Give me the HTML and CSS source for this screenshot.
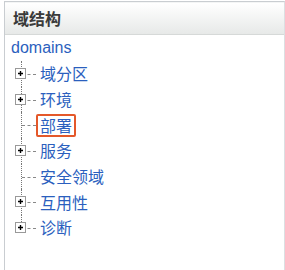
FILE: index.html
```html
<!DOCTYPE html>
<html lang="zh">
<head>
    <meta charset="UTF-8">
    <title>域结构</title>
    <link rel="stylesheet" href="styles.css">
</head>
<body>
    <div class="panel">
        <div class="panel-header">域结构</div>
        <div class="panel-body">
            <div class="root">domains</div>
            <ul class="tree">
                <li class="node"><svg class="toggle" viewBox="0 0 11 11"><rect x="0.5" y="0.5" width="10" height="10" fill="#fff" stroke="#999"/><path d="M3 5.5h5M5.5 3v5" stroke="#000" stroke-width="1.4"/></svg><span class="label">域分区</span></li>
                <li class="node"><svg class="toggle" viewBox="0 0 11 11"><rect x="0.5" y="0.5" width="10" height="10" fill="#fff" stroke="#999"/><path d="M3 5.5h5M5.5 3v5" stroke="#000" stroke-width="1.4"/></svg><span class="label">环境</span></li>
                <li class="node leaf"><span class="label selected">部署</span></li>
                <li class="node"><svg class="toggle" viewBox="0 0 11 11"><rect x="0.5" y="0.5" width="10" height="10" fill="#fff" stroke="#999"/><path d="M3 5.5h5M5.5 3v5" stroke="#000" stroke-width="1.4"/></svg><span class="label">服务</span></li>
                <li class="node leaf"><span class="label">安全领域</span></li>
                <li class="node"><svg class="toggle" viewBox="0 0 11 11"><rect x="0.5" y="0.5" width="10" height="10" fill="#fff" stroke="#999"/><path d="M3 5.5h5M5.5 3v5" stroke="#000" stroke-width="1.4"/></svg><span class="label">互用性</span></li>
                <li class="node last"><svg class="toggle" viewBox="0 0 11 11"><rect x="0.5" y="0.5" width="10" height="10" fill="#fff" stroke="#999"/><path d="M3 5.5h5M5.5 3v5" stroke="#000" stroke-width="1.4"/></svg><span class="label">诊断</span></li>
            </ul>
        </div>
    </div>
</body>
</html>
```

FILE: styles.css
```css
/* General */
body {
    margin: 0;
    padding: 1px 0 0 4px;
    background: #fff;
    font-family: "Liberation Sans", "Noto Sans CJK SC", sans-serif;
}

/* Panel */
.panel {
    border-top: 1px solid #c9cdd1;
    border-left: 1px solid #c9cdd1;
    border-right: 1px solid #dcdfe2;
    height: 269px;
}

.panel-header {
    height: 31px;
    line-height: 31px;
    padding-left: 8px;
    font-size: 16px;
    font-weight: bold;
    color: #3a3a3a;
    font-family: "Noto Sans CJK SC", sans-serif;
    background: linear-gradient(#ffffff, #e7e9e8);
    border-top: 1px solid #f4f5f5;
    border-bottom: 1px solid #d6d9d8;
}

.panel-body {
    padding: 3px 0 0 6px;
}

.root {
    font-size: 16px;
    color: #2b5fbe;
    line-height: 20px;
}

/* Tree */
.tree {
    list-style: none;
    margin: 0;
    padding: 3px 0 0 0;
}

.node {
    position: relative;
    height: 25.7px;
    display: flex;
    align-items: center;
    padding-left: 25px;
}

/* vertical guide */
.node::before {
    content: "";
    position: absolute;
    left: 10px;
    top: 0;
    bottom: 0;
    border-left: 1px dotted #777;
}

.node.last::before {
    bottom: 50%;
}

/* horizontal guide */
.node::after {
    content: "";
    position: absolute;
    left: 11px;
    width: 14px;
    top: 50%;
    border-top: 1px dashed #888;
}

.toggle {
    position: absolute;
    left: 4px;
    top: 50%;
    margin-top: -6px;
    width: 11px;
    height: 11px;
    z-index: 1;
}

.label {
    font-size: 16px;
    color: #2b5fbe;
    font-family: "Noto Sans CJK SC", sans-serif;
    line-height: 19px;
    border: 2px solid transparent;
    padding: 0 2px;
}

.label.selected {
    border-color: #e4582a;
    border-radius: 2px;
}
```
